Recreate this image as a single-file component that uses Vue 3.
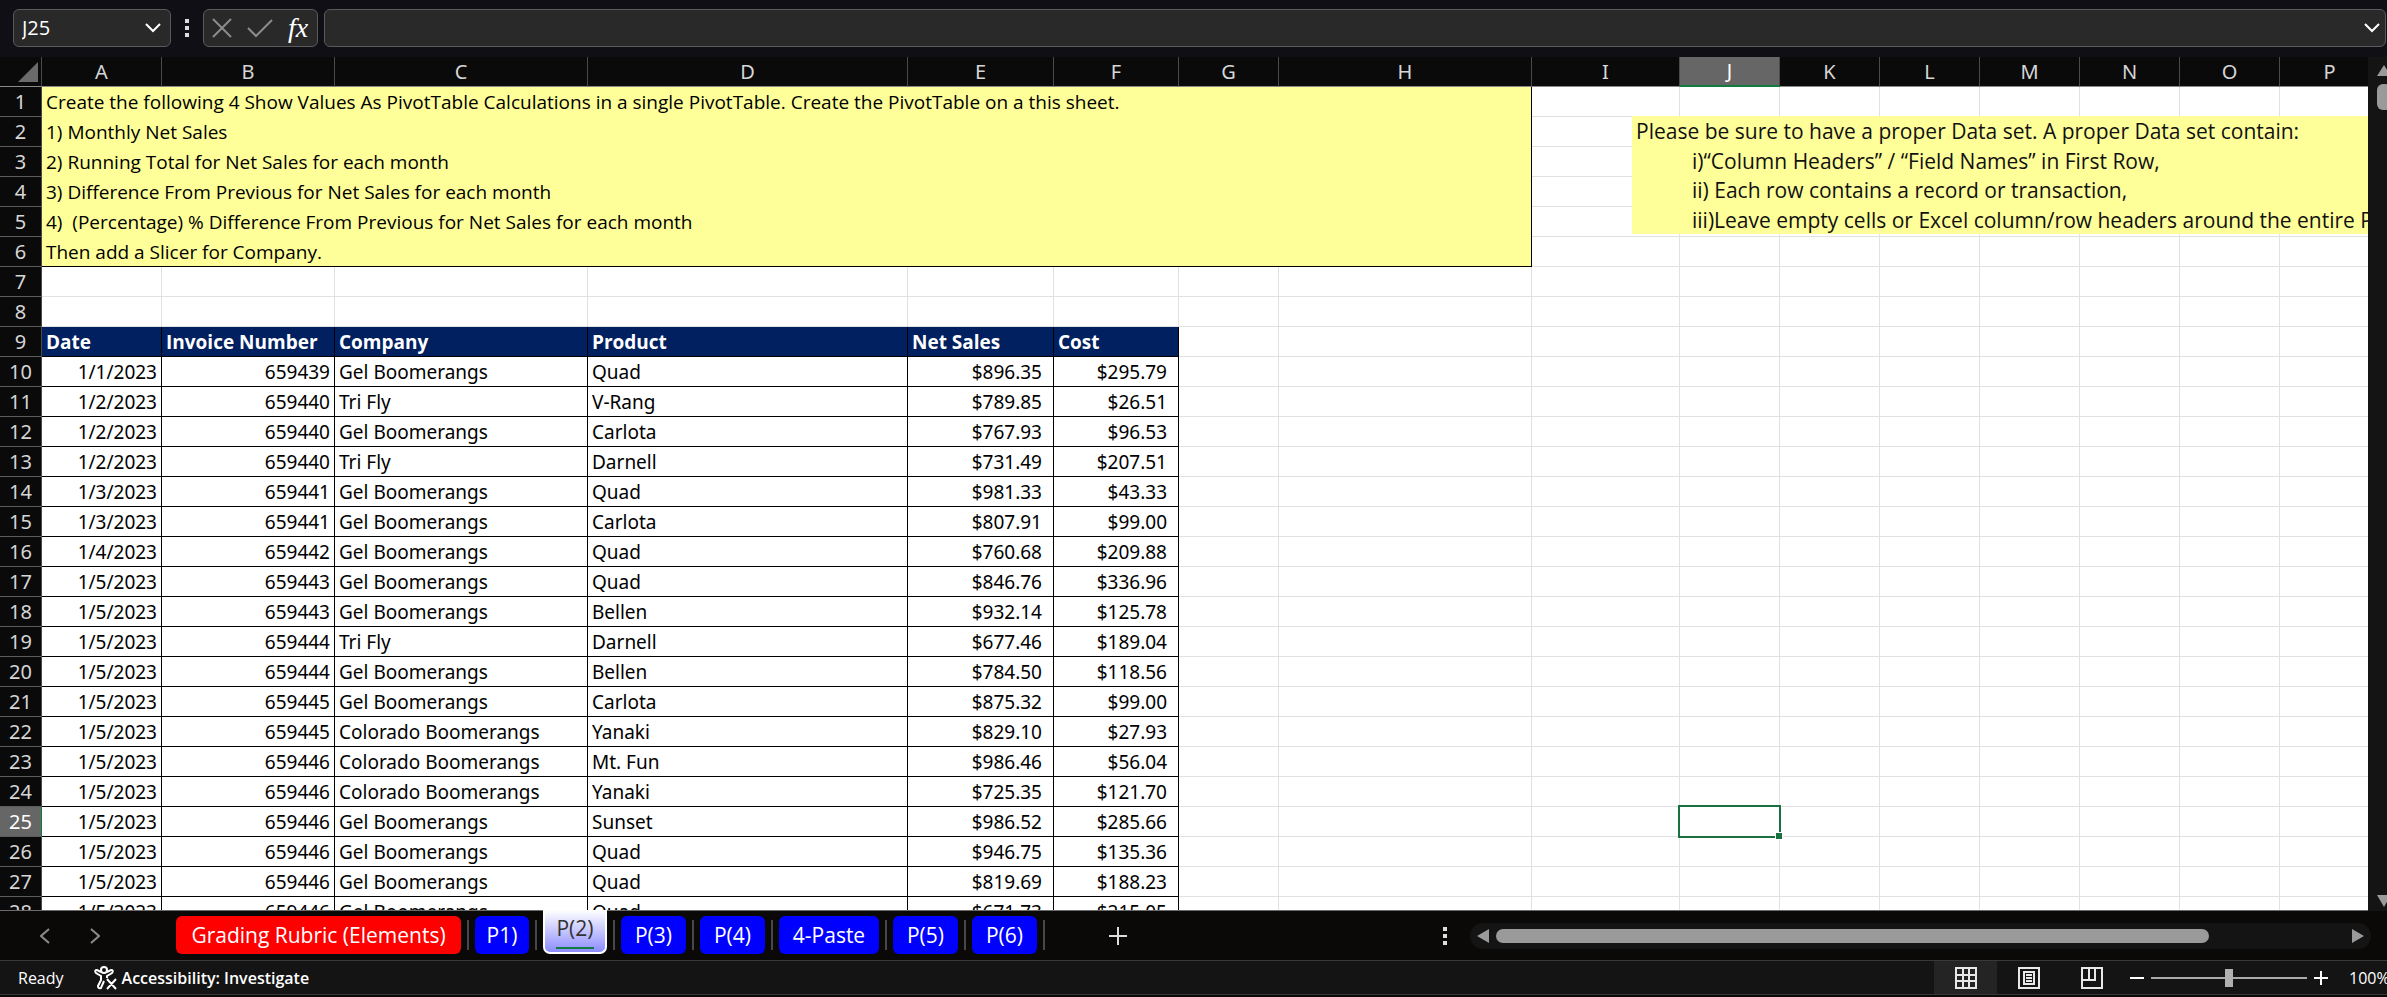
<script setup>
import { ref } from 'vue'

const columns = [
  { name: 'A', width: 120 },
  { name: 'B', width: 173 },
  { name: 'C', width: 253 },
  { name: 'D', width: 320 },
  { name: 'E', width: 146 },
  { name: 'F', width: 125 },
  { name: 'G', width: 100 },
  { name: 'H', width: 253 },
  { name: 'I', width: 148 },
  { name: 'J', width: 100 },
  { name: 'K', width: 100 },
  { name: 'L', width: 100 },
  { name: 'M', width: 100 },
  { name: 'N', width: 100 },
  { name: 'O', width: 100 },
  { name: 'P', width: 100 },
]

const notes = [
  'Create the following 4 Show Values As PivotTable Calculations in a single PivotTable. Create the PivotTable on a this sheet.',
  '1) Monthly Net Sales',
  '2) Running Total for Net Sales for each month',
  '3) Difference From Previous for Net Sales for each month',
  '4)  (Percentage) % Difference From Previous for Net Sales for each month',
  'Then add a Slicer for Company.',
]

const headings = ['Date', 'Invoice Number', 'Company', 'Product', 'Net Sales', 'Cost']

const records = [
  ['1/1/2023', 659439, 'Gel Boomerangs', 'Quad', '$896.35', '$295.79'],
  ['1/2/2023', 659440, 'Tri Fly', 'V-Rang', '$789.85', '$26.51'],
  ['1/2/2023', 659440, 'Gel Boomerangs', 'Carlota', '$767.93', '$96.53'],
  ['1/2/2023', 659440, 'Tri Fly', 'Darnell', '$731.49', '$207.51'],
  ['1/3/2023', 659441, 'Gel Boomerangs', 'Quad', '$981.33', '$43.33'],
  ['1/3/2023', 659441, 'Gel Boomerangs', 'Carlota', '$807.91', '$99.00'],
  ['1/4/2023', 659442, 'Gel Boomerangs', 'Quad', '$760.68', '$209.88'],
  ['1/5/2023', 659443, 'Gel Boomerangs', 'Quad', '$846.76', '$336.96'],
  ['1/5/2023', 659443, 'Gel Boomerangs', 'Bellen', '$932.14', '$125.78'],
  ['1/5/2023', 659444, 'Tri Fly', 'Darnell', '$677.46', '$189.04'],
  ['1/5/2023', 659444, 'Gel Boomerangs', 'Bellen', '$784.50', '$118.56'],
  ['1/5/2023', 659445, 'Gel Boomerangs', 'Carlota', '$875.32', '$99.00'],
  ['1/5/2023', 659445, 'Colorado Boomerangs', 'Yanaki', '$829.10', '$27.93'],
  ['1/5/2023', 659446, 'Colorado Boomerangs', 'Mt. Fun', '$986.46', '$56.04'],
  ['1/5/2023', 659446, 'Colorado Boomerangs', 'Yanaki', '$725.35', '$121.70'],
  ['1/5/2023', 659446, 'Gel Boomerangs', 'Sunset', '$986.52', '$285.66'],
  ['1/5/2023', 659446, 'Gel Boomerangs', 'Quad', '$946.75', '$135.36'],
  ['1/5/2023', 659446, 'Gel Boomerangs', 'Quad', '$819.69', '$188.23'],
  ['1/5/2023', 659446, 'Gel Boomerangs', 'Quad', '$671.73', '$215.05'],
]

const tabs = [
  { name: 'Grading Rubric (Elements)', width: 285, color: 'red' },
  { name: 'P1)', width: 54, color: 'blue' },
  { name: 'P(2)', width: 64, color: 'blue' },
  { name: 'P(3)', width: 65, color: 'blue' },
  { name: 'P(4)', width: 65, color: 'blue' },
  { name: '4-Paste', width: 100, color: 'blue' },
  { name: 'P(5)', width: 65, color: 'blue' },
  { name: 'P(6)', width: 65, color: 'blue' },
]

const activeTab = ref('P(2)')
const selected = ref({ col: 'J', row: 25 })
const cellName = ref('J25')
const formula = ref('')
const zoom = ref(100)

const headingRow = 9
const firstRecordRow = headingRow + 1

// alignment of each record column
const cellClass = ['cell-right', 'cell-right', '', '', 'cell-money', 'cell-money']

function emptyColumns(row) {
  if (row <= notes.length) return columns.slice(8)
  if (row < headingRow) return columns
  return columns.slice(headings.length)
}

function isSelected(col, row) {
  return selected.value.col === col && selected.value.row === row
}
</script>

<template>
  <div class="app">
    <header class="formula-bar">
      <div class="name-box">
        <input v-model="cellName" class="name-input" aria-label="Name box" />
        <button class="plain" aria-label="Show names">
          <svg width="18" height="12" viewBox="0 0 18 12"><path d="M2 2l7 7 7-7" /></svg>
        </button>
      </div>
      <span class="dots"><i></i><i></i><i></i></span>
      <div class="fx-box">
        <button class="plain dim" aria-label="Cancel">
          <svg width="20" height="20" viewBox="0 0 20 20"><path d="M1 1l18 18M19 1L1 19" /></svg>
        </button>
        <button class="plain dim" aria-label="Enter">
          <svg width="26" height="20" viewBox="0 0 26 20"><path d="M1 10l8 8L25 2" /></svg>
        </button>
        <button class="plain fx" aria-label="Insert function">fx</button>
      </div>
      <div class="formula-box">
        <input v-model="formula" class="formula-input" aria-label="Formula" />
        <button class="plain" aria-label="Expand formula bar">
          <svg width="18" height="12" viewBox="0 0 18 12"><path d="M2 2l7 7 7-7" /></svg>
        </button>
      </div>
    </header>

    <main class="sheet">
      <div class="viewport">
        <table class="grid">
          <colgroup>
            <col class="gutter" />
            <col v-for="c in columns" :key="c.name" :style="{ width: c.width + 'px' }" />
          </colgroup>
          <thead>
            <tr>
              <th class="corner"><svg width="20" height="20" viewBox="0 0 20 20"><path d="M20 0v20H0z" /></svg></th>
              <th v-for="c in columns" :key="c.name" scope="col" :class="['col-head', { current: c.name === selected.col }]">{{ c.name }}</th>
            </tr>
          </thead>
          <tbody>
            <tr v-for="row in 28" :key="row">
              <th scope="row" :class="['row-head', { current: row === selected.row }]">{{ row }}</th>
              <td v-if="row <= notes.length" colspan="8" :class="['note', { 'note-last': row === notes.length }]">{{ notes[row - 1] }}</td>
              <template v-else-if="row === headingRow">
                <td v-for="h in headings" :key="h" class="cell heading">{{ h }}</td>
              </template>
              <template v-else-if="row >= firstRecordRow">
                <td v-for="(value, i) in records[row - firstRecordRow]" :key="i" :class="['cell', cellClass[i]]">{{ value }}</td>
              </template>
              <td v-for="c in emptyColumns(row)" :key="c.name" class="empty">
                <span v-if="isSelected(c.name, row)" class="selection"><i class="handle"></i></span>
              </td>
            </tr>
          </tbody>
        </table>

        <div class="text-box">
          <p>Please be sure to have a proper Data set. A proper Data set contain:</p>
          <p class="indent">i)“Column Headers” / “Field Names” in First Row,</p>
          <p class="indent">ii) Each row contains a record or transaction,</p>
          <p class="indent">iii)Leave empty cells or Excel column/row headers around the entire P</p>
        </div>
      </div>
      <div class="v-scroll">
        <svg width="14" height="12" viewBox="0 0 14 12"><path d="M7 0l7 11H0z" /></svg>
        <span class="v-thumb"></span>
        <svg class="v-down" width="14" height="12" viewBox="0 0 14 12"><path d="M7 12L0 0h14z" /></svg>
      </div>
    </main>

    <nav class="tab-bar">
      <div class="tab-nav">
        <button class="plain dim" aria-label="Previous sheet">
          <svg width="10" height="16" viewBox="0 0 10 16"><path d="M9 1L1 8l8 7" /></svg>
        </button>
        <button class="plain dim" aria-label="Next sheet">
          <svg width="10" height="16" viewBox="0 0 10 16"><path d="M1 1l8 7-8 7" /></svg>
        </button>
      </div>
      <div class="tabs">
        <template v-for="t in tabs" :key="t.name">
          <button
            :class="['tab', t.color, { active: t.name === activeTab }]"
            :style="{ width: t.width + 'px' }"
            @click="activeTab = t.name"
          ><span>{{ t.name }}</span></button>
          <i class="divider"></i>
        </template>
      </div>
      <button class="plain add" aria-label="New sheet">
        <svg width="18" height="18" viewBox="0 0 18 18"><path d="M9 0v18M0 9h18" /></svg>
      </button>
      <span class="dots"><i></i><i></i><i></i></span>
      <div class="h-scroll">
        <svg width="12" height="14" viewBox="0 0 12 14"><path d="M0 7L12 0v14z" /></svg>
        <div class="h-track"><span class="h-thumb"></span></div>
        <svg width="12" height="14" viewBox="0 0 12 14"><path d="M12 7L0 0v14z" /></svg>
      </div>
    </nav>

    <footer class="status-bar">
      <span class="ready">Ready</span>
      <button class="plain access">
        <svg width="24" height="24" viewBox="0 0 24 24">
          <circle cx="10" cy="4" r="3" />
          <path d="M7 6L3 4Q0 4 2 7l5 3v4L4 20q0 3 3 2l3-7M13 6l4-2q3 0 1 3l-5 3v2M13 13l9 10M22 13l-9 10" />
        </svg>
        Accessibility: Investigate
      </button>
      <div class="views">
        <button class="view on" aria-label="Normal">
          <svg width="22" height="22" viewBox="0 0 22 22"><path d="M1 1h20v20H1zM1 8h20M1 14h20M8 1v20M14 1v20" /></svg>
        </button>
        <button class="view" aria-label="Page layout">
          <svg width="22" height="22" viewBox="0 0 22 22"><path d="M1 1h20v20H1zM6 5h10v12H6zM8 8h6M8 11h6M8 14h6" /></svg>
        </button>
        <button class="view" aria-label="Page break preview">
          <svg width="22" height="22" viewBox="0 0 22 22"><path d="M1 1h20v20H1zM1 13h13V1M8 1v12" /></svg>
        </button>
      </div>
      <div class="zoom">
        <button class="plain" aria-label="Zoom out" @click="zoom -= 10">
          <svg width="14" height="14" viewBox="0 0 14 14"><path d="M0 7h14" /></svg>
        </button>
        <input v-model.number="zoom" class="slider" type="range" min="0" max="200" aria-label="Zoom" />
        <button class="plain" aria-label="Zoom in" @click="zoom += 10">
          <svg width="14" height="14" viewBox="0 0 14 14"><path d="M0 7h14M7 0v14" /></svg>
        </button>
        <span class="percent">{{ zoom }}%</span>
      </div>
    </footer>
  </div>
</template>

<style>
body {
  margin: 0;
  background: #0b0908;
}
</style>

<style scoped>
.app {
  display: flex;
  flex-direction: column;
  height: 100vh;
  overflow: hidden;
  background: #0b0908;
  color: #fff;
  font-family: 'Open Sans', 'Noto Sans', sans-serif;
  font-size: 20px;
}
.app * {
  box-sizing: border-box;
}
svg {
  display: block;
  flex: none;
  fill: none;
  stroke: currentColor;
  stroke-width: 2;
}
button,
input {
  font: inherit;
  color: inherit;
}
.plain {
  display: flex;
  align-items: center;
  padding: 0;
  border: 0;
  background: none;
}
.dim {
  color: #8c8c8c;
}

/* formula bar */
.formula-bar {
  display: flex;
  flex: none;
  align-items: center;
  height: 57px;
  padding: 0 1px 2px 13px;
  background: #100f16;
}
.name-box,
.fx-box,
.formula-box {
  display: flex;
  align-items: center;
  height: 38px;
  border: 1px solid #5a5a5a;
  border-radius: 6px;
  background: #292929;
}
.name-box {
  width: 158px;
  padding: 0 8px;
}
.name-input,
.formula-input {
  flex: 1;
  min-width: 0;
  padding: 0;
  border: 0;
  outline: 0;
  background: none;
}
.dots {
  display: flex;
  flex: none;
  flex-direction: column;
  gap: 3px;
  width: 4px;
}
.dots i {
  height: 4px;
  background: #ddd;
}
.formula-bar .dots {
  margin: 0 14px;
}
.fx-box {
  gap: 15px;
  width: 115px;
  padding: 0 8px;
}
.fx {
  font-family: 'Liberation Serif', serif;
  font-size: 28px;
  font-style: italic;
  line-height: 30px;
}
.formula-box {
  flex: 1;
  margin-left: 6px;
  padding: 0 4px 0 8px;
}

/* sheet */
.sheet {
  display: flex;
  flex: 1;
  min-height: 0;
}
.viewport {
  position: relative;
  flex: 1;
  min-width: 0;
  overflow: hidden;
  border-bottom: 1px solid #6b6b6b;
  background: #fff;
}
.grid {
  width: max-content;
  border-collapse: separate;
  border-spacing: 0;
  color: #000;
  font-family: 'Noto Sans', 'Open Sans', sans-serif;
  font-size: 19px;
  line-height: 28px;
}
.gutter {
  width: 42px;
}
.grid th,
.grid td {
  height: 30px;
  padding: 0 4px;
  white-space: pre;
}
.corner,
.col-head,
.row-head {
  border-right: 1px solid #4a4a4a;
  border-bottom: 1px solid #8a8a8a;
  background: #0a0a0a;
  color: #d6d6d6;
  font-size: 20px;
  font-weight: 400;
}
.corner svg {
  margin-left: 18px;
  fill: #6b6b6b;
  stroke: none;
}
.grid .corner,
.grid .row-head {
  padding: 0;
}
.row-head {
  border-bottom-color: #5c5c5c;
}
.current {
  background: #666;
  color: #fff;
}
.col-head.current {
  border-bottom: 2px solid #107c41;
}
.row-head.current {
  border-right-color: #107c41;
}
.note {
  border-right: 1px solid #000;
  background: #ffff99;
  font-family: 'Open Sans', 'Noto Sans', sans-serif;
}
.note-last {
  border-bottom: 1px solid #000;
}
.cell {
  border-right: 1px solid #000;
  border-bottom: 1px solid #000;
}
.heading {
  background: #002060;
  color: #fff;
  font-family: 'Open Sans', 'Noto Sans', sans-serif;
  font-weight: 700;
}
.cell-right,
.cell-money {
  text-align: right;
}
.grid .cell-money {
  padding-right: 11px;
}
.empty {
  position: relative;
  border-right: 1px solid #e1e1e1;
  border-bottom: 1px solid #e1e1e1;
}
.selection {
  position: absolute;
  z-index: 1;
  inset: -2px;
  border: 2px solid #1a7040;
}
.handle {
  position: absolute;
  right: -4px;
  bottom: -4px;
  width: 8px;
  height: 8px;
  border: 1px solid #fff;
  background: #1a7040;
}
.text-box {
  position: absolute;
  top: 59px;
  right: 0;
  left: 1632px;
  display: grid;
  grid-template-rows: repeat(4, 1fr);
  height: 118px;
  padding-left: 4px;
  overflow: hidden;
  background: #ffff99;
  color: #111;
  font-size: 21px;
  line-height: 30px;
  white-space: nowrap;
}
.text-box p {
  height: 0;
  margin: 0;
}
.indent {
  padding-left: 56px;
}
.v-scroll {
  display: flex;
  flex: none;
  flex-direction: column;
  width: 19px;
  padding: 8px 0 4px 9px;
  overflow: hidden;
  background: #141414;
}
.v-scroll svg,
.h-scroll svg {
  fill: #9a9a9a;
  stroke: none;
}
.v-thumb {
  width: 14px;
  height: 26px;
  margin-top: 7px;
  border-radius: 6px;
  background: #9a9a9a;
}
.v-down {
  margin-top: auto;
}

/* sheet tabs */
.tab-bar {
  display: flex;
  flex: none;
  align-items: center;
  height: 49px;
}
.tab-nav {
  display: flex;
  flex: none;
  gap: 40px;
  width: 176px;
  padding-left: 40px;
}
.tabs {
  display: flex;
  flex: none;
  align-items: flex-end;
  gap: 6px;
  height: 49px;
  padding-bottom: 6px;
  font-size: 21px;
}
.tab {
  z-index: 1;
  flex: none;
  height: 38px;
  padding: 0;
  border: 0;
  border-radius: 6px;
  color: #fff;
  line-height: 38px;
  white-space: nowrap;
}
.red {
  background: #f00;
}
.blue {
  background: #00f;
}
.tab.active {
  display: flex;
  align-items: flex-start;
  justify-content: center;
  height: 44px;
  border: 2px solid #fff;
  border-top: 0;
  border-radius: 0 0 7px 7px;
  background: linear-gradient(#fff, #8c8cff);
  color: #333;
  line-height: 37px;
}
.active span {
  border-bottom: 2px solid #107c41;
}
.divider {
  flex: none;
  width: 2px;
  height: 30px;
  margin-bottom: 4px;
  background: #484848;
}
.add {
  margin-left: 64px;
  color: #ddd;
}
.tab-bar .dots {
  margin: 0 23px 0 auto;
}
.h-scroll {
  display: flex;
  flex: none;
  align-items: center;
  gap: 7px;
  width: 901px;
  height: 26px;
  margin-right: 16px;
  padding: 0 7px;
  border-radius: 13px;
  background: #141414;
}
.h-track {
  flex: 1;
}
.h-thumb {
  display: block;
  width: 84%;
  height: 14px;
  border-radius: 7px;
  background: #9a9a9a;
}

/* status bar */
.status-bar {
  display: flex;
  flex: none;
  align-items: center;
  height: 35px;
  margin-bottom: 2px;
  padding-left: 18px;
  border-top: 1px solid #383838;
  border-bottom: 1px solid #383838;
  background: #141414;
  font-size: 16px;
}
.access {
  gap: 4px;
  margin-left: 30px;
  font-weight: 600;
}
.views {
  display: flex;
  height: 100%;
  margin-left: auto;
}
.view {
  display: flex;
  align-items: center;
  justify-content: center;
  width: 63px;
  padding: 0;
  border: 0;
  background: none;
  color: #e8e8e8;
}
.view.on {
  background: #242424;
}
.zoom {
  display: flex;
  align-items: center;
  gap: 7px;
  margin-left: 7px;
}
.slider {
  width: 156px;
  height: 18px;
  margin: 0;
  appearance: none;
  background: linear-gradient(#aaa, #aaa) center / 100% 2px no-repeat;
}
.slider::-webkit-slider-thumb {
  appearance: none;
  width: 8px;
  height: 18px;
  background: #b0b0b0;
}
.percent {
  width: 38px;
  margin-left: 14px;
}
</style>
